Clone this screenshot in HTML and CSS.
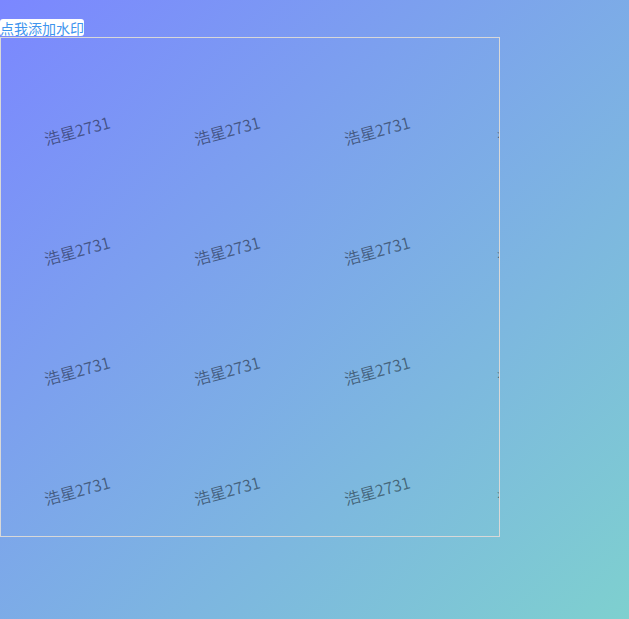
FILE: index.html
```html
<!DOCTYPE html>
<html lang="zh">
<head>
<meta charset="utf-8">
<title>水印</title>
<link rel="stylesheet" href="styles.css">
</head>
<body>
<div class="page">
  <button class="add-btn">点我添加水印</button>
  <div class="box">
    <div class="wm-layer">
      <span class="wm">浩星2731</span><span class="wm">浩星2731</span><span class="wm">浩星2731</span><span class="wm">浩星2731</span>
      <span class="wm">浩星2731</span><span class="wm">浩星2731</span><span class="wm">浩星2731</span><span class="wm">浩星2731</span>
      <span class="wm">浩星2731</span><span class="wm">浩星2731</span><span class="wm">浩星2731</span><span class="wm">浩星2731</span>
      <span class="wm">浩星2731</span><span class="wm">浩星2731</span><span class="wm">浩星2731</span><span class="wm">浩星2731</span>
    </div>
  </div>
</div>
</body>
</html>
```
FILE: styles.css
```css
html, body {
  margin: 0;
  padding: 0;
  height: 100%;
}
body {
  background: linear-gradient(to bottom right, #7b87ff 0%, #7ed0cf 100%);
  font-family: "Noto Sans CJK SC", "Noto Sans", sans-serif;
  overflow: hidden;
}
.page {
  padding-top: 19px;
  display: flex;
  flex-direction: column;
  align-items: flex-start;
}
.add-btn {
  font-family: "Noto Sans CJK SC", "Noto Sans", sans-serif;
  font-size: 14px;
  line-height: 16px;
  height: 17px;
  padding: 0;
  margin: 0 0 1px 0;
  border: none;
  border-radius: 3px;
  background: #ffffff;
  color: #3f95ee;
  cursor: pointer;
}
.box {
  position: relative;
  width: 500px;
  height: 500px;
  box-sizing: border-box;
  border: 1px solid #d8d8d8;
  overflow: hidden;
}
.wm-layer {
  position: absolute;
  left: 1px;
  top: 32px;
  display: grid;
  grid-template-columns: 150px 150px 150px 156px;
  grid-auto-rows: 120px;
  pointer-events: none;
}
.wm {
  display: flex;
  align-items: center;
  justify-content: center;
  font-size: 16px;
  color: rgba(0, 0, 0, 0.45);
  transform: rotate(-15deg);
  white-space: nowrap;
}
```
